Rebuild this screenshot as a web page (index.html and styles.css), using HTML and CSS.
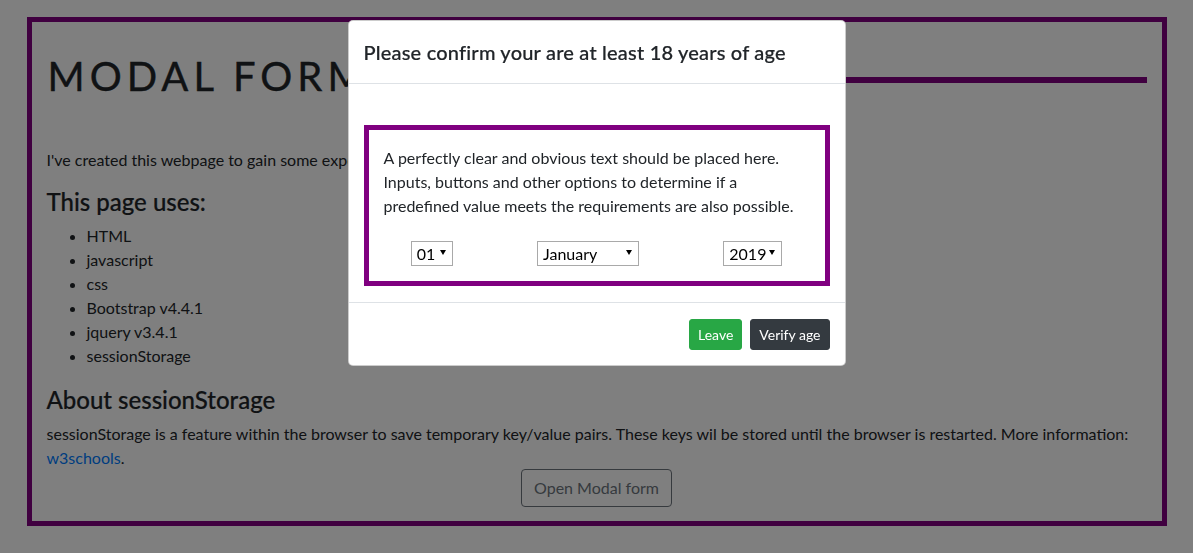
FILE: index.html
```html
<!DOCTYPE html>
<html lang="en">
<head>
<meta charset="utf-8">
<title>Modal form</title>
<link rel="stylesheet" href="styles.css">
</head>
<body>
<main class="page">
  <header class="page-header">
    <h1 class="page-title">Modal form</h1>
    <span class="title-rule"></span>
  </header>
  <p class="text">I've created this webpage to gain some experience with modal forms.</p>
  <h2 class="section-title">This page uses:</h2>
  <ul class="tech-list">
    <li>HTML</li>
    <li>javascript</li>
    <li>css</li>
    <li>Bootstrap v4.4.1</li>
    <li>jquery v3.4.1</li>
    <li>sessionStorage</li>
  </ul>
  <h2 class="section-title">About sessionStorage</h2>
  <p class="text text-last">sessionStorage is a feature within the browser to save temporary key/value pairs. These keys wil be stored until the browser is restarted. More information:<br><a class="link" href="#">w3schools</a>.</p>
  <div class="open-row">
    <button class="btn-open" type="button">Open Modal form</button>
  </div>
</main>

<div class="backdrop"></div>

<div class="modal" role="dialog" aria-modal="true">
  <div class="modal-header">
    <h5 class="modal-title">Please confirm your are at least 18 years of age</h5>
  </div>
  <div class="modal-body">
    <div class="age-box">
      <p class="age-text">A perfectly clear and obvious text should be placed here.<br>Inputs, buttons and other options to determine if a predefined value meets the requirements are also possible.</p>
      <div class="age-selects">
        <span class="select-wrap">
          <select class="sel sel-day">
            <option>01</option><option>02</option><option>03</option>
          </select>
        </span>
        <span class="select-wrap">
          <select class="sel sel-month">
            <option>January</option><option>February</option><option>March</option>
          </select>
        </span>
        <span class="select-wrap">
          <select class="sel sel-year">
            <option>2019</option><option>2018</option><option>2017</option>
          </select>
        </span>
      </div>
    </div>
  </div>
  <div class="modal-footer">
    <button class="btn btn-leave" type="button">Leave</button>
    <button class="btn btn-verify" type="button">Verify age</button>
  </div>
</div>
</body>
</html>
```
FILE: styles.css
```css
* {
  box-sizing: border-box;
}

html,
body {
  margin: 0;
  padding: 0;
}

body {
  font-family: Lato, "Noto Sans", "Liberation Sans", sans-serif;
  font-size: 16px;
  line-height: 1.5;
  color: #212529;
  background: #fff;
  height: 553px;
  overflow: hidden;
}

.page {
  width: 1140px;
  margin: 17px auto 0;
  border: 5px solid #800080;
  padding: 0 15px 14px;
}

.page-header {
  display: flex;
  align-items: flex-start;
  margin-top: 30px;
  margin-bottom: 48px;
}

.page-title {
  margin: 0 0 0 1px;
  font-size: 40px;
  font-weight: 400;
  line-height: 1.2;
  letter-spacing: 5px;
  text-transform: uppercase;
  white-space: nowrap;
  -webkit-text-stroke: 0.4px currentColor;
}

.title-rule {
  flex: 1;
  height: 6px;
  margin-top: 25px;
  margin-left: 24px;
  background: #800080;
}

.text {
  margin: 0 0 16px;
}

.text-last {
  margin-bottom: 0;
}

.section-title {
  margin: 0 0 7px;
  font-size: 24px;
  font-weight: 500;
  line-height: 1.2;
  -webkit-text-stroke: 0.2px currentColor;
}

.tech-list {
  margin: 0 0 18px;
  padding-left: 40px;
}

.link {
  color: #007bff;
  text-decoration: none;
}

.open-row {
  display: flex;
  justify-content: center;
  margin-top: -1px;
}

.btn-open {
  font-family: inherit;
  font-size: 16px;
  line-height: 1.5;
  padding: 6px 12px;
  color: #6c757d;
  background: transparent;
  border: 1px solid #6c757d;
  border-radius: 4px;
}

.backdrop {
  position: fixed;
  inset: 0;
  background: rgba(0, 0, 0, 0.5);
}

.modal {
  position: fixed;
  top: 20px;
  left: 50%;
  width: 498px;
  margin-left: -249px;
  background: #fff;
  border: 1px solid rgba(0, 0, 0, 0.2);
  border-radius: 5px;
  color: #212529;
}

.modal-header {
  padding: 16px 16px 16px 15px;
  border-bottom: 1px solid #dee2e6;
}

.modal-title {
  margin: 0;
  font-size: 20px;
  font-weight: 500;
  line-height: 1.5;
  letter-spacing: 0.2px;
  -webkit-text-stroke: 0.2px currentColor;
}

.modal-body {
  padding: 16px 15px;
}

.age-box {
  margin-top: 25px;
  border: 5px solid #800080;
  padding: 16px 0 15px;
}

.age-text {
  margin: 0 0 23px;
  padding: 0 15px;
}

.age-selects {
  display: flex;
  justify-content: space-around;
}

.select-wrap {
  position: relative;
  display: inline-block;
  height: 25px;
}

.select-wrap::after {
  content: "";
  position: absolute;
  top: 9px;
  right: 7px;
  border-left: 3px solid transparent;
  border-right: 3px solid transparent;
  border-top: 5px solid #000;
  pointer-events: none;
}

.sel {
  appearance: none;
  -webkit-appearance: none;
  height: 25px;
  margin: 0;
  padding: 0 0 0 5px;
  font-family: inherit;
  font-size: 16px;
  line-height: 23px;
  color: #000;
  background: #fff;
  border: 1px solid #a9a9a9;
  border-radius: 0;
}

.sel-day {
  width: 42px;
}

.sel-month {
  width: 102px;
}

.sel-year {
  width: 59px;
}

.modal-footer {
  display: flex;
  justify-content: flex-end;
  gap: 8px;
  padding: 16px 15px 15px;
  border-top: 1px solid #dee2e6;
}

.btn {
  font-family: inherit;
  font-size: 14px;
  line-height: 1.5;
  padding: 4px 8px;
  border: 1px solid transparent;
  border-radius: 3px;
  color: #fff;
}

.btn-leave {
  background: #28a745;
  border-color: #28a745;
}

.btn-verify {
  background: #343a40;
  border-color: #343a40;
}
```
